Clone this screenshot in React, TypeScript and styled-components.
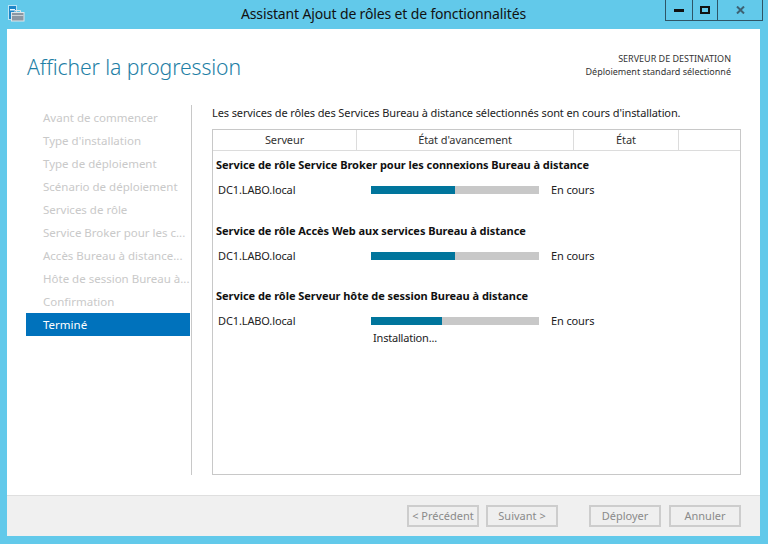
import React, { FC } from 'react';
import styled, { createGlobalStyle } from 'styled-components';

const FONT = '"Noto Sans", "Open Sans", "Liberation Sans", sans-serif';

const GlobalStyle = createGlobalStyle`
    html, body {
        margin: 0;
        padding: 0;
        background: #62c9ea;
    }
    body {
        font-family: ${FONT};
    }
`;

const Frame = styled.div`
    width: 768px;
    height: 544px;
    background: #62c9ea;
    display: flex;
    flex-direction: column;
    overflow: hidden;
`;

const TitleBar = styled.div`
    height: 29px;
    flex: none;
    display: grid;
    grid-template-columns: 1fr auto 1fr;
    align-items: start;
`;

const AppIcon = styled.svg`
    width: 17px;
    height: 17px;
    margin: 5px 0 0 8px;
    display: block;
`;

const Title = styled.div`
    font-size: 14px;
    line-height: 19px;
    padding: 4px 1px 0 0;
    color: #111;
    letter-spacing: -0.15px;
`;

const Controls = styled.div`
    justify-self: end;
    margin-right: 5px;
    display: flex;
    height: 20px;
    border: 1px solid #2e5566;
    border-top: none;
`;

const Control = styled.div<{ $width: number; $divider?: boolean }>`
    width: ${p => p.$width}px;
    display: flex;
    align-items: center;
    justify-content: center;
    border-right: ${p => (p.$divider ? '1px solid #2e5566' : 'none')};
`;

const Client = styled.div`
    flex: 1;
    margin: 0 8px 8px 7px;
    background: #ffffff;
    display: flex;
    flex-direction: column;
    min-height: 0;
`;

const Header = styled.div`
    height: 76px;
    flex: none;
    display: flex;
    justify-content: space-between;
    padding: 0 29px 0 20px;
`;

const PageTitle = styled.h1`
    margin: 21px 0 0;
    font-size: 21.2px;
    line-height: 34px;
    font-weight: 300;
    color: #1f7fa6;
    letter-spacing: -0.1px;
`;

const Destination = styled.div`
    padding-top: 23px;
    text-align: right;
    font-size: 9px;
    line-height: 13px;
    color: #333;
`;

const Body = styled.div`
    flex: 1;
    display: flex;
    min-height: 0;
`;

const Sidebar = styled.nav`
    width: 164px;
    flex: none;
    margin-left: 19px;
    padding-top: 1px;
`;

const Step = styled.div<{ $active?: boolean }>`
    height: 23px;
    line-height: 23px;
    padding-left: 17px;
    font-size: 11.5px;
    white-space: nowrap;
    overflow: hidden;
    color: ${p => (p.$active ? '#ffffff' : '#c9c9c9')};
    background: ${p => (p.$active ? '#0072bc' : 'transparent')};
`;

const Divider = styled.div`
    width: 1px;
    flex: none;
    margin: 0 20px 20px 1px;
    background: #c8c8c8;
`;

const Main = styled.main`
    flex: 1;
    display: flex;
    flex-direction: column;
    margin-right: 19px;
    padding-bottom: 20px;
    min-width: 0;
`;

const Intro = styled.p`
    margin: 0;
    height: 24px;
    font-size: 11px;
    line-height: 16px;
    letter-spacing: -0.11px;
    color: #222;
    white-space: nowrap;
`;

const TableBox = styled.div`
    flex: 1;
    border: 1px solid #c8c8c8;
    display: flex;
    flex-direction: column;
`;

const TableHead = styled.div`
    display: grid;
    grid-template-columns: 144px 217px 105px 1fr;
    height: 20px;
    flex: none;
    border-bottom: 1px solid #dcdcdc;
`;

const HeadCell = styled.div`
    font-size: 11px;
    line-height: 20px;
    letter-spacing: -0.1px;
    text-align: center;
    color: #333;
    border-right: 1px solid #dcdcdc;
    &:last-child {
        border-right: none;
    }
`;

const Group = styled.section`
    padding: 6px 0 0 3px;
    height: 65.5px;
    box-sizing: border-box;
`;

const GroupTitle = styled.div`
    font-size: 11px;
    line-height: 16px;
    font-weight: 700;
    letter-spacing: -0.04px;
    color: #111;
    white-space: nowrap;
`;

const Row = styled.div`
    display: grid;
    grid-template-columns: 153px 168px auto;
    align-items: center;
    margin-top: 9px;
    padding-left: 2px;
    height: 16px;
`;

const Cell = styled.div`
    font-size: 11px;
    line-height: 16px;
    letter-spacing: -0.12px;
    color: #222;
`;

const Status = styled(Cell)`
    padding-left: 12px;
`;

const Track = styled.div`
    height: 8px;
    background: #c8c8c8;
`;

const Fill = styled.div`
    height: 100%;
    background: #00759c;
`;

const Note = styled.div`
    margin: 1px 0 0 157px;
    font-size: 11px;
    line-height: 16px;
    letter-spacing: -0.2px;
    color: #222;
`;

const Footer = styled.footer`
    height: 41px;
    flex: none;
    box-sizing: border-box;
    background: #f0f0f0;
    border-top: 1px solid #dfdfdf;
    display: flex;
    justify-content: flex-end;
    align-items: flex-start;
    padding: 9px 19px 0 0;
`;

const WizardButton = styled.button<{ $gap?: number }>`
    width: 72px;
    height: 22px;
    box-sizing: border-box;
    margin-left: ${p => p.$gap ?? 0}px;
    padding: 0;
    background: #efefef;
    border: 2px solid #cdcdcd;
    font-family: ${FONT};
    font-size: 11px;
    line-height: 18px;
    color: #8a8a8a;
`;

const steps = [
    'Avant de commencer',
    "Type d'installation",
    'Type de déploiement',
    'Scénario de déploiement',
    'Services de rôle',
    'Service Broker pour les c...',
    'Accès Bureau à distance...',
    'Hôte de session Bureau à...',
    'Confirmation',
    'Terminé',
];

const groups = [
    { title: 'Service de rôle Service Broker pour les connexions Bureau à distance', progress: 50 },
    { title: 'Service de rôle Accès Web aux services Bureau à distance', progress: 50 },
    { title: 'Service de rôle Serveur hôte de session Bureau à distance', progress: 42, note: 'Installation...' },
];

const App: FC = () => (
    <Frame>
        <GlobalStyle />
        <TitleBar>
            <AppIcon viewBox="0 0 17 17">
                <rect x="0.5" y="0.5" width="8" height="14" fill="#1c86c8" stroke="#b9e3f4" />
                <rect x="2" y="4" width="5" height="1.5" fill="#e8f6fc" />
                <rect x="3.5" y="7.5" width="12.5" height="8.5" fill="#8b97a3" stroke="#dfe6ea" />
                <path d="M7 7.5V5.5h5.5v2" fill="none" stroke="#dfe6ea" />
                <rect x="4" y="10" width="11.5" height="1" fill="#c9d2d8" />
            </AppIcon>
            <Title>Assistant Ajout de rôles et de fonctionnalités</Title>
            <Controls>
                <Control $width={26} $divider>
                    <svg width="10" height="3" viewBox="0 0 10 3"><rect width="10" height="3" fill="#111" /></svg>
                </Control>
                <Control $width={24} $divider>
                    <svg width="10" height="8" viewBox="0 0 10 8"><rect x="1" y="1" width="8" height="6" fill="none" stroke="#111" strokeWidth="2" /></svg>
                </Control>
                <Control $width={44}>
                    <svg width="9" height="8" viewBox="0 0 9 8"><path d="M1 0.5L8 7.5M8 0.5L1 7.5" stroke="#3d6273" strokeWidth="2" /></svg>
                </Control>
            </Controls>
        </TitleBar>
        <Client>
            <Header>
                <PageTitle>Afficher la progression</PageTitle>
                <Destination>
                    <div>SERVEUR DE DESTINATION</div>
                    <div>Déploiement standard sélectionné</div>
                </Destination>
            </Header>
            <Body>
                <Sidebar>
                    {steps.map(step => (
                        <Step key={step} $active={step === 'Terminé'}>{step}</Step>
                    ))}
                </Sidebar>
                <Divider />
                <Main>
                    <Intro>Les services de rôles des Services Bureau à distance sélectionnés sont en cours d'installation.</Intro>
                    <TableBox>
                        <TableHead>
                            <HeadCell>Serveur</HeadCell>
                            <HeadCell>État d'avancement</HeadCell>
                            <HeadCell>État</HeadCell>
                            <HeadCell />
                        </TableHead>
                        {groups.map(group => (
                            <Group key={group.title}>
                                <GroupTitle>{group.title}</GroupTitle>
                                <Row>
                                    <Cell>DC1.LABO.local</Cell>
                                    <Track>
                                        <Fill style={{ width: `${group.progress}%` }} />
                                    </Track>
                                    <Status>En cours</Status>
                                </Row>
                                {group.note && <Note>{group.note}</Note>}
                            </Group>
                        ))}
                    </TableBox>
                </Main>
            </Body>
            <Footer>
                <WizardButton>&lt; Précédent</WizardButton>
                <WizardButton $gap={7}>Suivant &gt;</WizardButton>
                <WizardButton $gap={31}>Déployer</WizardButton>
                <WizardButton $gap={8}>Annuler</WizardButton>
            </Footer>
        </Client>
    </Frame>
);

export default App;
